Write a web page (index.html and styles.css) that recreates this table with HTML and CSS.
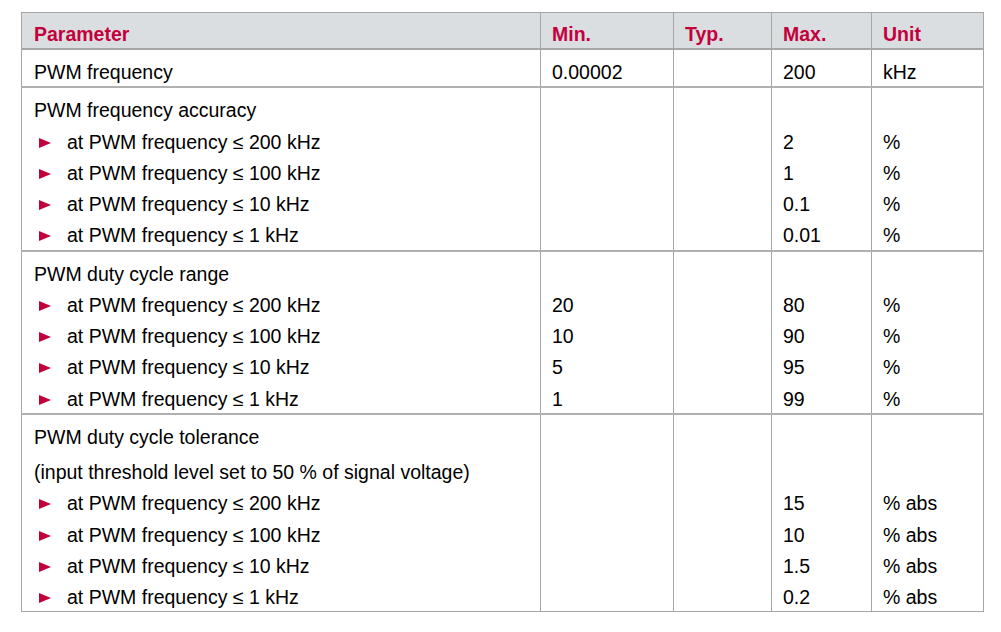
FILE: index.html
```html
<!DOCTYPE html>
<html>
<head>
<meta charset="utf-8">
<link rel="stylesheet" href="styles.css">
</head>
<body>
<table class="spec">
  <colgroup>
    <col class="c-param"><col class="c-min"><col class="c-typ"><col class="c-max"><col class="c-unit">
  </colgroup>
  <thead>
    <tr><th>Parameter</th><th>Min.</th><th>Typ.</th><th>Max.</th><th>Unit</th></tr>
  </thead>
  <tbody>
    <tr class="first"><td>PWM frequency</td><td>0.00002</td><td></td><td>200</td><td>kHz</td></tr>
  </tbody>
  <tbody>
    <tr class="first"><td>PWM frequency accuracy</td><td></td><td></td><td></td><td></td></tr>
    <tr><td><span class="bullet"></span>at PWM frequency ≤ 200 kHz</td><td></td><td></td><td>2</td><td>%</td></tr>
    <tr><td><span class="bullet"></span>at PWM frequency ≤ 100 kHz</td><td></td><td></td><td>1</td><td>%</td></tr>
    <tr><td><span class="bullet"></span>at PWM frequency ≤ 10 kHz</td><td></td><td></td><td>0.1</td><td>%</td></tr>
    <tr><td><span class="bullet"></span>at PWM frequency ≤ 1 kHz</td><td></td><td></td><td>0.01</td><td>%</td></tr>
  </tbody>
  <tbody>
    <tr class="first"><td>PWM duty cycle range</td><td></td><td></td><td></td><td></td></tr>
    <tr><td><span class="bullet"></span>at PWM frequency ≤ 200 kHz</td><td>20</td><td></td><td>80</td><td>%</td></tr>
    <tr><td><span class="bullet"></span>at PWM frequency ≤ 100 kHz</td><td>10</td><td></td><td>90</td><td>%</td></tr>
    <tr><td><span class="bullet"></span>at PWM frequency ≤ 10 kHz</td><td>5</td><td></td><td>95</td><td>%</td></tr>
    <tr><td><span class="bullet"></span>at PWM frequency ≤ 1 kHz</td><td>1</td><td></td><td>99</td><td>%</td></tr>
  </tbody>
  <tbody>
    <tr class="first"><td>PWM duty cycle tolerance</td><td></td><td></td><td></td><td></td></tr>
    <tr class="note"><td>(input threshold level set to 50 % of signal voltage)</td><td></td><td></td><td></td><td></td></tr>
    <tr><td><span class="bullet"></span>at PWM frequency ≤ 200 kHz</td><td></td><td></td><td>15</td><td>% abs</td></tr>
    <tr><td><span class="bullet"></span>at PWM frequency ≤ 100 kHz</td><td></td><td></td><td>10</td><td>% abs</td></tr>
    <tr><td><span class="bullet"></span>at PWM frequency ≤ 10 kHz</td><td></td><td></td><td>1.5</td><td>% abs</td></tr>
    <tr><td><span class="bullet"></span>at PWM frequency ≤ 1 kHz</td><td></td><td></td><td>0.2</td><td>% abs</td></tr>
  </tbody>
</table>
</body>
</html>
```
FILE: styles.css
```css
html, body {
  margin: 0;
  padding: 0;
  background: #ffffff;
}
body {
  padding: 12px 0 0 21px;
  font-family: "Liberation Sans", Arial, sans-serif;
  color: #000000;
}
.spec {
  border-collapse: collapse;
  table-layout: fixed;
  width: 962px;
  border: 1px solid #a6a6a6;
}
.c-param { width: 519px; }
.c-min { width: 133px; }
.c-typ { width: 98px; }
.c-max { width: 100px; }
.c-unit { width: 112px; }

.spec th, .spec td {
  border-left: 1px solid #a6a6a6;
  border-right: 1px solid #a6a6a6;
  text-align: left;
  vertical-align: top;
  padding: 0 0 0 11px;
  white-space: nowrap;
}
.spec th {
  background: #dadee1;
  color: #c4003c;
  font-weight: bold;
  font-size: 19.5px;
  line-height: 27px;
  height: 35px;
  box-sizing: border-box;
  padding-top: 8px;
  border-bottom: 2px solid #a6a6a6;
}
.spec td {
  font-size: 19.5px;
  line-height: 27.25px;
  height: 27.25px;
  padding-top: 4px;
}
.spec td:first-child, .spec th:first-child {
  padding-left: 12px;
}
.spec tbody + tbody {
  border-top: 2px solid #b0b0b0;
}
.spec tr.first td {
  padding-top: 9px;
}
.spec tr.note td {
  padding-top: 8px;
}
.bullet {
  display: inline-block;
  width: 0;
  height: 0;
  border-left: 12px solid #c4003c;
  border-top: 5px solid transparent;
  border-bottom: 5px solid transparent;
  margin: 0 16px 0 5px;
  vertical-align: 1px;
}
```
